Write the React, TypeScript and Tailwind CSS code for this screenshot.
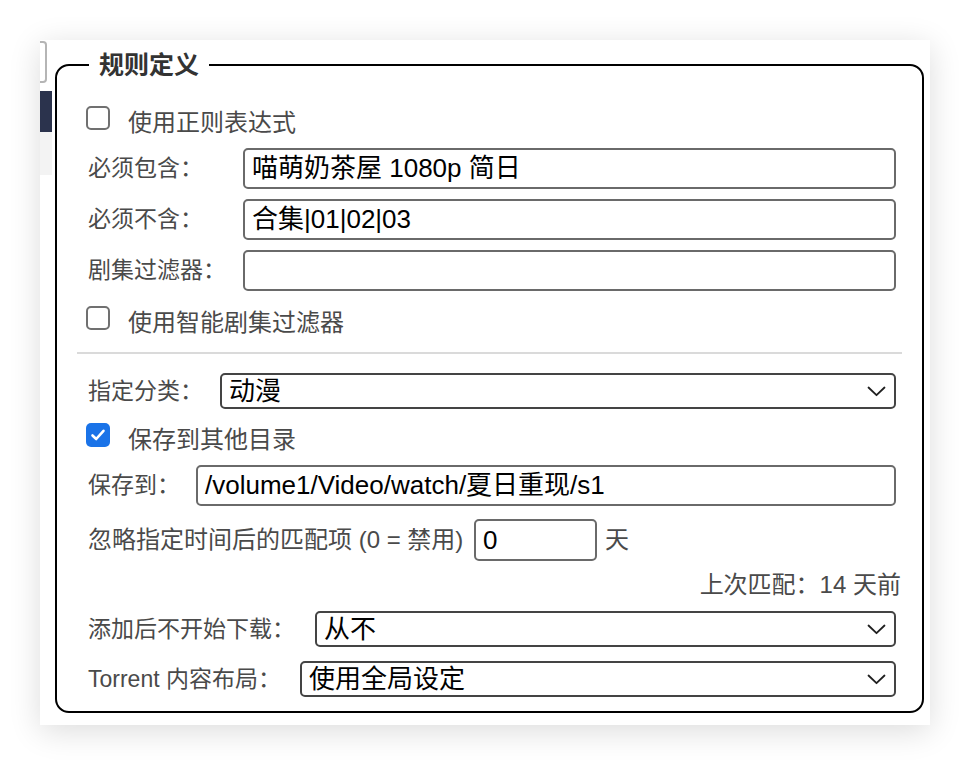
import React from 'react';

const font = 'font-["Liberation_Sans","Noto_Sans_CJK_SC",sans-serif]';

const Checkbox = ({ checked, label }: { checked?: boolean; label: string }) => (
  <div className="flex items-center h-[24px] pl-[9px]">
    {checked ? (
      <span className="w-[24px] h-[24px] shrink-0 rounded-[5px] bg-[#1a73e8] flex items-center justify-center">
        <svg width="16" height="16" viewBox="0 0 16 16" fill="none">
          <path d="M2.5 8.5 L6.2 12 L13.5 3.8" stroke="white" strokeWidth="2.6" strokeLinecap="round" strokeLinejoin="round" />
        </svg>
      </span>
    ) : (
      <span className="w-[24px] h-[24px] shrink-0 rounded-[5px] border-2 border-[#707070] bg-white" />
    )}
    <span className="ml-[18px] mt-[10px] text-[24px] leading-none text-[#4a4a4a] whitespace-nowrap">{label}</span>
  </div>
);

const TextRow = ({ label, labelW, value, mt }: { label: string; labelW: string; value: string; mt: string }) => (
  <div className={`flex items-center pl-[11px] pr-[6px] ${mt}`}>
    <span className={`${labelW} shrink-0 text-[23px] text-[#4a4a4a] whitespace-nowrap`}>{label}</span>
    <div className="flex-1 h-[41px] border-2 border-[#6a6a6a] rounded-[5px] flex items-center pl-[7px] text-[26px] text-black whitespace-nowrap overflow-hidden">
      {value}
    </div>
  </div>
);

const SelectRow = ({ label, labelW, value, mt }: { label: string; labelW: string; value: string; mt: string }) => (
  <div className={`flex items-center pl-[11px] pr-[6px] ${mt}`}>
    <span className={`${labelW} shrink-0 text-[23px] text-[#4a4a4a] whitespace-nowrap`}>{label}</span>
    <div className="flex-1 h-[36px] border-2 border-[#444] rounded-[5px] flex items-center justify-between pl-[7px] pr-[8px] text-[26px] text-black">
      <span>{value}</span>
      <svg width="19" height="11" viewBox="0 0 19 11" fill="none">
        <path d="M1.5 1.5 L9.5 9.2 L17.5 1.5" stroke="#1f1f1f" strokeWidth="1.8" strokeLinecap="round" strokeLinejoin="round" />
      </svg>
    </div>
  </div>
);

export default function App() {
  return (
    <div className={`min-h-[766px] bg-white pt-[40px] pl-[40px] ${font}`}>
      <div className="w-[890px] h-[685px] bg-white shadow-[0_6px_30px_rgba(0,0,0,0.14)] flex">
        {/* bits of the page underneath */}
        <div className="w-[12px] shrink-0 flex flex-col">
          <div className="mt-[1px] w-[7px] h-[42px] border-2 border-l-0 border-[#b5b5b5] rounded-r-[4px] bg-white" />
          <div className="mt-[8px] h-[41px] bg-[#2b334d]" />
          <div className="h-[43px] bg-[#f3f3f3]" />
        </div>

        <fieldset className="ml-[3px] mt-[10px] w-[869px] h-[663px] border-2 border-black rounded-[14px] px-[20px] pb-[14px] min-w-0">
          <legend className="ml-[12px] px-[10px] text-[25px] leading-[30px] font-bold text-[#333]">规则定义</legend>

          <div className="mt-[26px]">
            <Checkbox label="使用正则表达式" />
          </div>

          <TextRow label="必须包含：" labelW="w-[155px]" value="喵萌奶茶屋 1080p 简日" mt="mt-[18px]" />
          <TextRow label="必须不含：" labelW="w-[155px]" value="合集|01|02|03" mt="mt-[10px]" />
          <TextRow label="剧集过滤器：" labelW="w-[155px]" value="" mt="mt-[10px]" />

          <div className="mt-[15px]">
            <Checkbox label="使用智能剧集过滤器" />
          </div>

          <div className="mt-[22px] h-[2px] bg-[#dadada]" />

          <SelectRow label="指定分类：" labelW="w-[132px]" value="动漫" mt="mt-[19px]" />

          <div className="mt-[14px]">
            <Checkbox checked label="保存到其他目录" />
          </div>

          <TextRow label="保存到：" labelW="w-[108px]" value="/volume1/Video/watch/夏日重现/s1" mt="mt-[18px]" />

          <div className="flex items-center pl-[11px] mt-[13px]">
            <span className="text-[24px] text-[#4a4a4a] whitespace-nowrap w-[386px] shrink-0">忽略指定时间后的匹配项 (0 = 禁用)</span>
            <div className="w-[123px] h-[42px] border-2 border-[#6a6a6a] rounded-[5px] flex items-center pl-[7px] text-[26px] text-black">0</div>
            <span className="ml-[8px] text-[24px] text-[#4a4a4a]">天</span>
          </div>

          <div className="mt-[12px] h-[24px] flex items-center justify-end pr-[1px] text-[24px] text-[#4a4a4a]">
            上次匹配：14 天前
          </div>

          <SelectRow label="添加后不开始下载：" labelW="w-[227px]" value="从不" mt="mt-[14px]" />
          <SelectRow label="Torrent 内容布局：" labelW="w-[212px]" value="使用全局设定" mt="mt-[14px]" />
        </fieldset>
      </div>
    </div>
  );
}
